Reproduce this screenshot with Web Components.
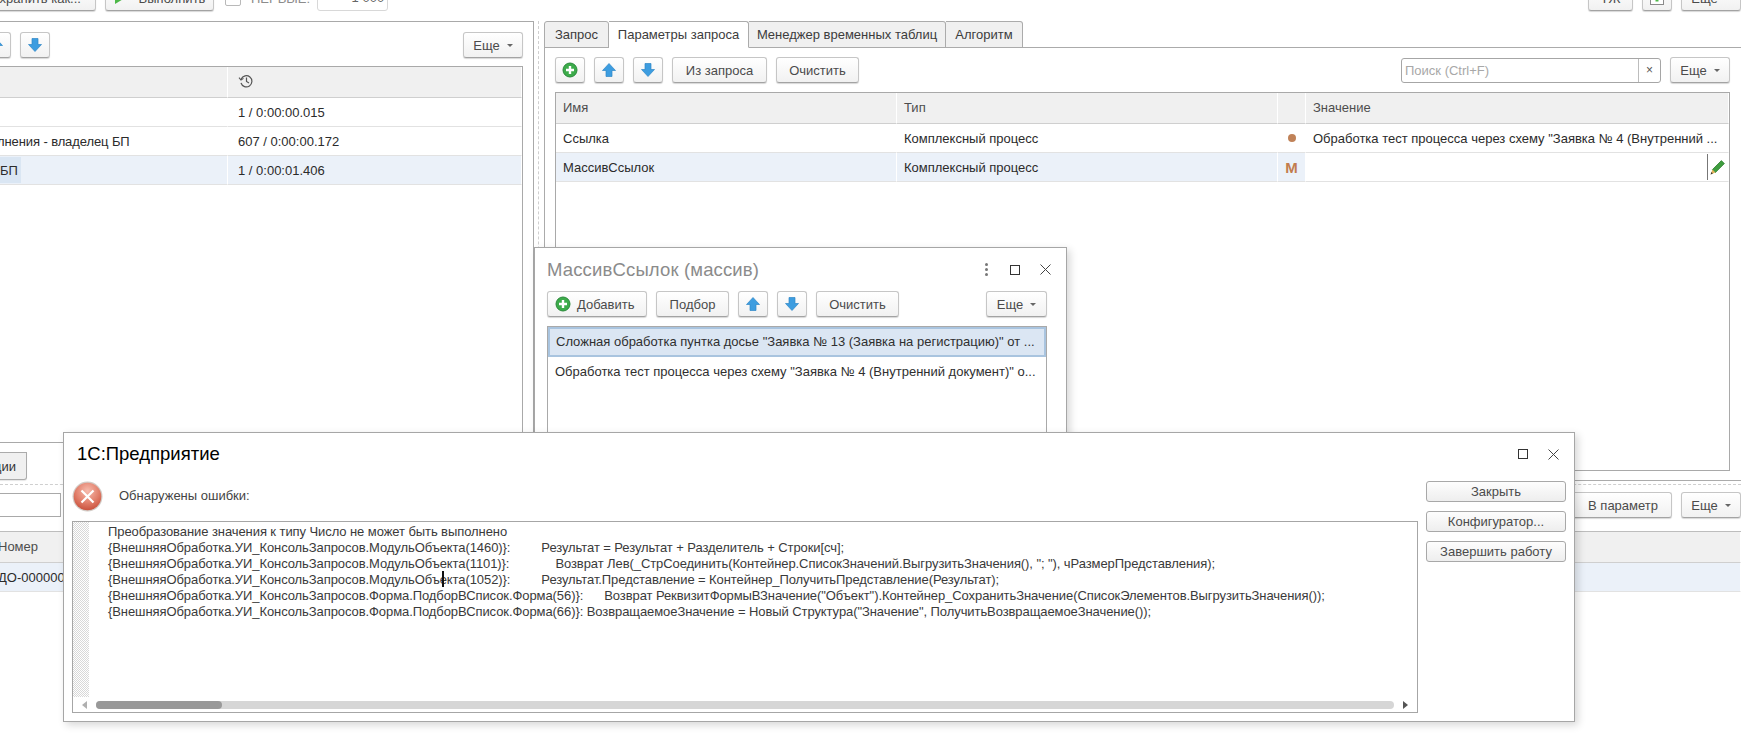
<!DOCTYPE html>
<html lang="ru"><head><meta charset="utf-8"><title>Консоль запросов</title>
<style>html,body{margin:0;padding:0;background:#fff;overflow:hidden;height:744px}</style>
</head><body><x-app></x-app>
<script>
const ICONS={
up:'<svg width="16" height="16" viewBox="0 0 16 16"><path d="M8 1.5 14.5 8.5H11V14.5H5V8.5H1.5Z" fill="#3d9de0" stroke="#2f86c6" stroke-width=".7" stroke-linejoin="round"/></svg>',
down:'<svg width="16" height="16" viewBox="0 0 16 16"><path d="M5 1.5H11V7.5H14.5L8 14.5 1.5 7.5H5Z" fill="#3d9de0" stroke="#2f86c6" stroke-width=".7" stroke-linejoin="round"/></svg>',
add:'<svg width="16" height="16" viewBox="0 0 16 16"><circle cx="8" cy="8" r="7" fill="#3cab4a" stroke="#2b8a3b"/><path d="M8 4v8M4 8h8" stroke="#fff" stroke-width="2.4"/></svg>',
play:'<svg width="12" height="14" viewBox="0 0 12 14"><path d="M1 1 11 7 1 13Z" fill="#4db848"/></svg>',
box:'<svg width="14" height="14" viewBox="0 0 14 14"><rect x=".5" y=".5" width="13" height="13" fill="#fff" stroke="#8a8a8a"/><path d="M7 3.500v7" stroke="#4db848" stroke-width="3"/></svg>',
history:'<svg width="16" height="16" viewBox="0 0 16 16" fill="none" stroke="#555" stroke-width="1.2"><path d="M3.2 6A5.6 5.6 0 1 1 3 10"/><path d="M1 4.6 3 7 5.5 5.4" stroke-width="1.1"/><path d="M8.5 4.6V8.5L11 10"/></svg>',
pencil:'<svg width="15" height="15" viewBox="1 1.500 12.500 12.500"><path d="M3 9.500 10.500 2 13 4.500 5.500 12Z" fill="#3f9d3f" stroke="#2a7a2a" stroke-width=".6"/><path d="M3 9.500 5.500 12 1.500 13.500Z" fill="#e3b35a"/><path d="M1.500 13.500 2.200 11.600 3.400 12.800Z" fill="#333"/></svg>',
error:'<svg width="31" height="31" viewBox="0 0 31 31"><defs><radialGradient id="e" cx=".5" cy=".3" r=".75"><stop offset="0" stop-color="#f7bcae"/><stop offset=".55" stop-color="#e2806c"/><stop offset="1" stop-color="#c64a35"/></radialGradient></defs><circle cx="15.500" cy="15.500" r="15" fill="#d2cbc6"/><circle cx="15.500" cy="15.500" r="13.800" fill="url(#e)"/><path d="M9.500 9.500 21.500 21.500M21.500 9.500 9.500 21.500" stroke="#fff" stroke-width="2.200"/></svg>'
};
function def(name,html,extra){
  const t=document.createElement('template');t.innerHTML=html;
  customElements.define(name,class extends HTMLElement{
    constructor(){super();this.attachShadow({mode:'open'}).appendChild(t.content.cloneNode(true));}
    connectedCallback(){extra&&extra.call(this);}
  });
}
def('x-icon','<style>:host{display:inline-flex;flex:none;line-height:0}</style><span id="i"></span>',function(){
  this.shadowRoot.getElementById('i').innerHTML=ICONS[this.getAttribute('name')]||'';
});
def('x-btn',`<style>
:host{display:inline-flex;box-sizing:border-box;height:26px;flex:none;align-items:center;justify-content:center;gap:6px;border:1px solid #c6c6c6;border-bottom-color:#a3a3a3;border-radius:3px;background:linear-gradient(#fff,#f1f1f1);box-shadow:0 1px 1px rgba(0,0,0,.16);color:#4b4b4b;font:13px "Liberation Sans",Arial,sans-serif;white-space:nowrap;overflow:hidden}
:host([small]){height:21px;box-shadow:none;border-color:#a8a8a8;background:linear-gradient(#fdfdfd,#eeeeee);border-radius:3px}
i{width:0;height:0;border:3px solid transparent;border-top:3.500px solid #666;border-bottom:0;margin-left:1px}
:host(:not([more])) i{display:none}
</style><slot></slot><i></i>`);
def('x-tab',`<style>
:host{display:flex;box-sizing:border-box;height:27px;align-items:center;justify-content:center;background:#f0f0f0;border:1px solid #ababab;border-left:0;border-radius:0 3px 0 0;color:#3c3c3c;font:13px "Liberation Sans",Arial,sans-serif;white-space:nowrap}
:host([first]){border-left:1px solid #ababab;border-radius:3px 3px 0 0}
:host([active]){background:#fff;border-bottom-color:#fff;position:relative;z-index:1}
</style><slot></slot>`);
def('x-grid',`<style>
:host{display:grid;box-sizing:border-box;grid-template-columns:var(--cols);grid-auto-rows:29px;grid-template-rows:31px;align-content:start;border:1px solid var(--edge,#a9a9a9);background:#fff;color:#2b2b2b;font:13px "Liberation Sans",Arial,sans-serif}
</style><slot></slot>`);
def('x-cell',`<style>
:host{display:flex;box-sizing:border-box;align-items:center;min-width:0;padding:0 8px 0 var(--cellpad,8px);border-bottom:1px solid #e2e2e2;border-right:1px solid #fff;white-space:nowrap;overflow:hidden}
:host([head]){background:#f0f0f0;color:#4d4d4d;border-bottom-color:#cfcfcf;padding-bottom:2px}
:host([sel]){background:#ebf1f9}
:host([mark]){justify-content:center;padding:0}
</style><slot></slot>`);
def('x-window',`<style>
:host{display:flex;flex-direction:column;position:absolute;box-sizing:border-box;background:#fff;border:1px solid #a6a6a6;box-shadow:3px 3px 8px rgba(0,0,0,.16);font:13px "Liberation Sans",Arial,sans-serif}
header{display:flex;flex:none;align-items:center;height:var(--head,42px);padding:0 15px 0 var(--pad,12px);font-size:18.500px;letter-spacing:var(--tspace,0);color:var(--title,#000)}
header .t{flex:1;padding-bottom:var(--tpad,0)}
.c{display:flex;align-items:center;gap:20px;padding-bottom:var(--tpad,0)}
.d{display:none;flex-direction:column;gap:2px;margin-right:2px}
:host([dots]) .d{display:flex}
.d b{width:3px;height:3px;background:#777;border-radius:50%}
.m{width:8px;height:8px;border:1.300px solid #333}
svg{display:block}
main{flex:1;min-height:0;display:flex;flex-direction:column}
</style><header><div class="t"><slot name="title"></slot></div><div class="c"><div class="d"><b></b><b></b><b></b></div><div class="m"></div><svg width="11" height="11" viewBox="0 0 11 11"><path d="M.5.500 10.500 10.500M10.500.500.500 10.500" stroke="#444" stroke-width="1"/></svg></div></header><main><slot></slot></main>`);
def('x-toolbar',`<style>:host{display:flex;flex:none;align-items:center;height:26px;gap:9px}::slotted(.end){margin-left:auto}</style><slot></slot>`);
def('x-scrollbar',`<style>
:host{display:flex;flex:none;align-items:center;height:15px;color:#555}
.a{flex:none;width:0;height:0;border:4px solid transparent}
.l{border-right:5px solid #b0b0b0;border-left:0;margin:0 8px 0 9px}
.r{border-left:5px solid #555;border-right:0;margin:0 9px 0 8px}
.k{flex:1;height:8px;border-radius:4px;background:#d6d6d6;margin-left:1px;margin-right:1px}
.k div{width:126px;height:8px;border-radius:4px;background:#999}
</style><div class="a l"></div><div class="k"><div></div></div><div class="a r"></div>`);
def('x-memo',`<style>
:host{display:flex;flex-direction:column;box-sizing:border-box;flex:1;min-height:0;border:1px solid #a6a6a6;position:relative;background:#fff}
.b{flex:1;min-height:0;display:flex}
.g{flex:none;width:16px;background:repeating-conic-gradient(#d8d8d8 0 25%,#fff 0 50%) 0 0/2px 2px}
.x{flex:1;padding:2px 0 0 19px;font:13px/16px "Liberation Sans",Arial,sans-serif;letter-spacing:-.08px;color:#3a3a3a;white-space:pre;overflow:hidden}
</style><div class="b"><div class="g"></div><div class="x"><slot></slot></div></div><x-scrollbar></x-scrollbar>`);

const style=`<style>
:host{display:block;position:relative;width:1741px;height:744px;overflow:hidden;font:13px "Liberation Sans",Arial,sans-serif;color:#333;background:#fff}
.top{display:flex;align-items:center;height:26px;margin:-15px 0 0 -32px;padding-bottom:10px;gap:9px}
.top .chk{flex:none;width:14px;height:14px;margin:0 0 0 2px;border:1px solid #b9b9b9;border-radius:2px}
.top .lbl{color:#8c8c8c;margin:0 0 0 1px}
.top .inp{box-sizing:border-box;width:71px;height:26px;margin:-1px 0 0 -2px;border:1px solid #d8d8d8;border-radius:3px;padding:0 3px;text-align:right;color:#666;line-height:24px}
.up{display:flex;height:459px}
.lp{flex:none;width:542px;margin-left:-8px;padding-left:0;display:flex;flex-direction:column}
.lbox{box-sizing:border-box;height:424px;border:1px solid #a9a9a9;border-width:1px 1px 0 0;padding:10px 10px 0 0;display:flex;flex-direction:column}
.lbox x-grid{flex:1;margin-top:8px;--cols:236px 1fr;--cellpad:10px;border-left:0}
.lbox x-cell.n{--cellpad:5px;letter-spacing:-.1px}
.lbox x-cell.b{--cellpad:8px}
.hl{align-self:stretch;margin:1px 0;display:flex;align-items:center;padding:0 3px 0 0;background:#dae6f3}
.ltab{box-sizing:border-box;display:flex;align-items:center;justify-content:flex-end;width:35px;height:28px;margin-top:9px;padding:0 10px 0 0;background:#f0f0f0;border:1px solid #ababab;border-left:0;border-radius:0 0 3px 0;box-shadow:0 1px 1px rgba(0,0,0,.1)}
.split{flex:none;width:10px;position:relative}
.split::before{content:"";display:block;width:0;height:100%;margin-left:4px;border-left:1px dashed #cfcfcf}
.rp{flex:1;min-width:0;display:flex;flex-direction:column;border-bottom:1px solid #ababab;box-sizing:border-box;height:460px}
.tabs{display:grid;grid-template-columns:65px 140px 197px 77px;flex:none;height:27px;position:relative}
.tabs::after{content:"";position:absolute;left:0;right:0;bottom:0;border-bottom:1px solid #ababab}
.rbody{flex:1;min-height:0;border-left:1px solid #ababab;padding:9px 11px 9px 10px;display:flex;flex-direction:column}
.rbody x-grid{flex:1;margin-top:9px;--cols:341px 381px 28px 1fr;--cellpad:7px}
.search{box-sizing:border-box;display:flex;align-self:center;margin-left:auto;width:260px;height:25px;border:1px solid #a6a6a6;border-radius:3px;color:#a8a8a8;line-height:23px;padding-left:3px}
.search span:first-child{flex:1}
.search .xx{flex:none;width:21px;text-align:center;border-left:1px solid #bdbdbd;color:#555;font-size:12px;margin-left:0}
.dot{width:8px;height:8px;background:#c08258;border-radius:50%}
.em{color:#c27c4e;font-weight:bold;font-size:15px}
.edit{padding-right:3px;justify-content:flex-end;gap:2px}
.bar{align-self:stretch;width:1px;margin:1px 0;background:#777}
.low{flex:1;margin-top:4px;border-top:1px dashed #cfcfcf;padding-top:7px}
.low x-toolbar{margin-left:-8px}
.linp{box-sizing:border-box;flex:none;width:69px;height:24px;border:1px solid #a9a9a9;}
.low x-grid{margin:13px 0 0 -8px;--cols:240px 1fr;--cellpad:6px;--edge:transparent;border-top:1px solid #bdbdbd;border-left:0;border-right:0;border-bottom:0}
.mid{left:534px;top:247px;width:533px;height:240px;padding:0 0 0;--title:#8b8b8b;--head:43px;--pad:12px;--tspace:.15px}
.mid x-toolbar{margin:0 19px 0 12px}
.list{box-sizing:border-box;flex:1;margin:9px 19px 0 12px;border:1px solid #a9a9a9;font-size:13px;color:#2f2f2f}
.li{box-sizing:border-box;height:29px;padding:0 7px 1px;display:flex;align-items:center;white-space:nowrap;overflow:hidden}
.li.s{height:30px;background:#dbe6f3;border:2px solid #a9c4df;padding:0 6px 1px}
.main{left:63px;top:432px;width:1512px;height:290px;--head:48px;--pad:13px;--tpad:6px;font-size:13px}
.body{flex:1;min-height:0;display:grid;grid-template-columns:1fr 140px;gap:0 8px;padding:0 8px 8px 8px}
.lc{display:flex;flex-direction:column;min-height:0}
.err{flex:none;height:40px;display:flex;gap:16px;align-items:flex-start;color:#444}
.err span{padding-top:7px}
.rc{display:flex;flex-direction:column;gap:9px}
.cur{position:absolute;left:369px;top:49px;width:2px;height:16px;background:#111}
.gap{display:inline-block}
</style>`;
const html=style+`
<div class="top">
 <x-btn style="width:128px">Сохранить как...</x-btn>
 <x-btn style="width:109px;gap:13px"><x-icon name="play"></x-icon>Выполнить</x-btn>
 <div class="chk"></div><span class="lbl">ПЕРВЫЕ:</span><div class="inp">1 000</div>
 <x-btn style="width:45px;margin-left:auto">ТЖ</x-btn>
 <x-btn style="width:30px"><x-icon name="box"></x-icon></x-btn>
 <x-btn more style="width:60px">Еще</x-btn>
</div>
<div class="up">
 <section class="lp">
  <div class="lbox">
   <x-toolbar><x-btn style="width:30px;margin-left:-11px"><x-icon name="up"></x-icon></x-btn><x-btn style="width:30px"><x-icon name="down"></x-icon></x-btn><x-btn class="end" more style="width:60px">Еще</x-btn></x-toolbar>
   <x-grid>
    <x-cell head></x-cell><x-cell head><x-icon name="history"></x-icon></x-cell>
    <x-cell></x-cell><x-cell>1 / 0:00:00.015</x-cell>
    <x-cell class="n">лнения - владелец БП</x-cell><x-cell>607 / 0:00:00.172</x-cell>
    <x-cell sel class="b"><span class="hl">БП</span></x-cell><x-cell sel>1 / 0:00:01.406</x-cell>
   </x-grid>
  </div>
  <div class="ltab">ции</div>
 </section>
 <div class="split"></div>
 <section class="rp">
  <div class="tabs"><x-tab first>Запрос</x-tab><x-tab active>Параметры запроса</x-tab><x-tab>Менеджер временных таблиц</x-tab><x-tab>Алгоритм</x-tab></div>
  <div class="rbody">
   <x-toolbar>
    <x-btn style="width:30px"><x-icon name="add"></x-icon></x-btn><x-btn style="width:30px"><x-icon name="up"></x-icon></x-btn><x-btn style="width:30px"><x-icon name="down"></x-icon></x-btn>
    <x-btn style="width:95px">Из запроса</x-btn><x-btn style="width:83px">Очистить</x-btn>
    <div class="search"><span>Поиск (Ctrl+F)</span><span class="xx">×</span></div>
    <x-btn more style="width:60px">Еще</x-btn>
   </x-toolbar>
   <x-grid>
    <x-cell head>Имя</x-cell><x-cell head>Тип</x-cell><x-cell head></x-cell><x-cell head>Значение</x-cell>
    <x-cell>Ссылка</x-cell><x-cell>Комплексный процесс</x-cell><x-cell mark><span class="dot"></span></x-cell><x-cell>Обработка тест процесса через схему "Заявка № 4 (Внутренний ...</x-cell>
    <x-cell sel>МассивСсылок</x-cell><x-cell sel>Комплексный процесс</x-cell><x-cell sel mark><span class="em">М</span></x-cell><x-cell class="edit"><span class="bar"></span><x-icon name="pencil"></x-icon></x-cell>
   </x-grid>
  </div>
 </section>
</div>
<section class="low">
 <x-toolbar><div class="linp"></div><x-btn class="end" style="width:140px;justify-content:flex-end;padding-right:13px">В параметр</x-btn><x-btn more style="width:60px">Еще</x-btn></x-toolbar>
 <x-grid><x-cell head>Номер</x-cell><x-cell head></x-cell><x-cell sel>ДО-00000000</x-cell><x-cell sel></x-cell></x-grid>
</section>
<x-window class="mid" dots>
 <span slot="title">МассивСсылок (массив)</span>
 <x-toolbar>
  <x-btn style="width:100px;justify-content:flex-start;padding-left:7px"><x-icon name="add"></x-icon>Добавить</x-btn><x-btn style="width:73px">Подбор</x-btn>
  <x-btn style="width:30px"><x-icon name="up"></x-icon></x-btn><x-btn style="width:30px"><x-icon name="down"></x-icon></x-btn><x-btn style="width:83px">Очистить</x-btn>
  <x-btn class="end" more style="width:61px">Еще</x-btn>
 </x-toolbar>
 <div class="list">
  <div class="li s">Сложная обработка пунтка досье "Заявка № 13 (Заявка на регистрацию)" от ...</div>
  <div class="li">Обработка тест процесса через схему "Заявка № 4 (Внутренний документ)" о...</div>
 </div>
</x-window>
<x-window class="main">
 <span slot="title">1С:Предприятие</span>
 <div class="body">
  <div class="lc">
   <div class="err"><x-icon name="error"></x-icon><span>Обнаружены ошибки:</span></div>
   <x-memo>Преобразование значения к типу Число не может быть выполнено
{ВнешняяОбработка.УИ_КонсольЗапросов.МодульОбъекта(1460)}:<span class="gap" style="width:31px"></span>Результат = Результат + Разделитель + Строки[сч];
{ВнешняяОбработка.УИ_КонсольЗапросов.МодульОбъекта(1101)}:<span class="gap" style="width:46px"></span>Возврат Лев(_СтрСоединить(Контейнер.СписокЗначений.ВыгрузитьЗначения(), "; "), чРазмерПредставления);
{ВнешняяОбработка.УИ_КонсольЗапросов.МодульОбъекта(1052)}:<span class="gap" style="width:31px"></span>Результат.Представление = Контейнер_ПолучитьПредставление(Результат);
{ВнешняяОбработка.УИ_КонсольЗапросов.Форма.ПодборВСписок.Форма(56)}:<span class="gap" style="width:21px"></span>Возврат РеквизитФормыВЗначение("Объект").Контейнер_СохранитьЗначение(СписокЭлементов.ВыгрузитьЗначения());
{ВнешняяОбработка.УИ_КонсольЗапросов.Форма.ПодборВСписок.Форма(66)}: ВозвращаемоеЗначение = Новый Структура("Значение", ПолучитьВозвращаемоеЗначение());<span class="cur"></span></x-memo>
  </div>
  <div class="rc"><x-btn small>Закрыть</x-btn><x-btn small>Конфигуратор...</x-btn><x-btn small>Завершить работу</x-btn></div>
 </div>
</x-window>`;
def('x-app',html);
</script></body></html>
